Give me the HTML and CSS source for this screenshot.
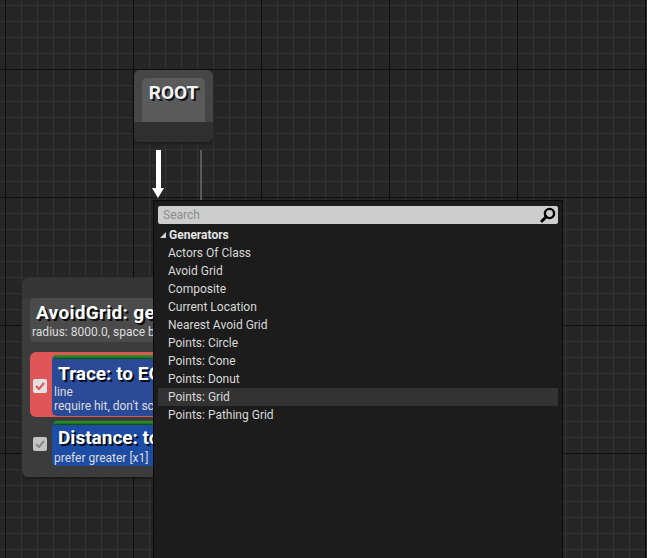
FILE: index.html
```html
<!DOCTYPE html>
<html>
<head>
<meta charset="utf-8">
<link rel="stylesheet" href="styles.css">
</head>
<body>
<div class="canvas">
  <div class="root-node">
    <div class="root-btn"><span class="root-label">ROOT</span></div>
    <div class="root-pin"></div>
  </div>

  <div class="wire-arrow">
    <svg width="14" height="50" viewBox="0 0 14 50"><rect x="5" y="0" width="5" height="39" fill="#ffffff"/><polygon points="1,38 13,38 7,48" fill="#ffffff"/></svg>
  </div>
  <div class="wire-gray"></div>

  <div class="gen-node">
    <div class="gen-title">
      <div class="title-text">AvoidGrid: generate around Querier</div>
      <div class="sub-text">radius: 8000.0, space between: 100.0</div>
    </div>
    <div class="test-row selected">
      <div class="check-cell"><span class="check on"><svg width="10" height="8" viewBox="0 0 10 8"><polyline points="1,4 4,7 9,1" fill="none" stroke="#e05a5a" stroke-width="2.2"/></svg></span></div>
      <div class="test-block trace">
        <div class="stripe"></div>
        <div class="test-title">Trace: to EQSContext_Target</div>
        <div class="test-sub">line</div>
        <div class="test-sub">require hit, don't score</div>
      </div>
    </div>
    <div class="test-row plain">
      <div class="check-cell"><span class="check off"><svg width="10" height="8" viewBox="0 0 10 8"><polyline points="1,4 4,7 9,1" fill="none" stroke="#8a8a8a" stroke-width="2.2"/></svg></span></div>
      <div class="test-block dist">
        <div class="stripe"></div>
        <div class="test-title">Distance: to Querier</div>
        <div class="test-sub">prefer greater [x1]</div>
      </div>
    </div>
  </div>

  <div class="menu">
    <div class="search">
      <span class="placeholder">Search</span>
      <svg class="mag" width="16" height="16" viewBox="0 0 16 16"><circle cx="9.5" cy="6.5" r="4.6" fill="none" stroke="#000" stroke-width="2.4"/><line x1="6.2" y1="9.8" x2="2" y2="14" stroke="#000" stroke-width="3" stroke-linecap="round"/></svg>
    </div>
    <div class="tree">
      <div class="row cat"><svg class="tri" width="7" height="7" viewBox="0 0 7 7"><polygon points="6,0 6,6 0,6" fill="#d0d0d0"/></svg><span>Generators</span></div>
      <div class="row">Actors Of Class</div>
      <div class="row">Avoid Grid</div>
      <div class="row">Composite</div>
      <div class="row">Current Location</div>
      <div class="row">Nearest Avoid Grid</div>
      <div class="row">Points: Circle</div>
      <div class="row">Points: Cone</div>
      <div class="row">Points: Donut</div>
      <div class="row hover">Points: Grid</div>
      <div class="row">Points: Pathing Grid</div>
    </div>
  </div>
</div>
</body>
</html>
```
FILE: styles.css
```css
html, body {
  margin: 0;
  padding: 0;
  background: #262626;
}
.canvas {
  position: relative;
  width: 647px;
  height: 558px;
  overflow: hidden;
  font-family: Roboto, "Liberation Sans", sans-serif;
  background-color: #262626;
  background-image:
    linear-gradient(to right, #0f0f0f 1px, transparent 1px),
    linear-gradient(to bottom, #0f0f0f 1px, transparent 1px),
    linear-gradient(to right, #333333 1px, transparent 1px),
    linear-gradient(to bottom, #333333 1px, transparent 1px);
  background-size: 128px 128px, 128px 128px, 16px 16px, 16px 16px;
  background-position: 133px 0, 0 69px, 5px 0, 0 5px;
}

/* ROOT node */
.root-node {
  position: absolute;
  left: 134px;
  top: 70px;
  width: 79px;
  height: 72px;
  border-radius: 6px;
  background: #464646;
  display: flex;
  flex-direction: column;
  overflow: hidden;
  box-shadow: 0 1px 3px rgba(0,0,0,0.5);
}
.root-btn {
  margin: 8px 8px 0 8px;
  height: 44px;
  border-radius: 5px 5px 0 0;
  background: #5a5a5a;
  display: flex;
  justify-content: center;
}
.root-label {
  color: #f2f2f2;
  font-weight: 700;
  font-size: 19px;
  line-height: 22px;
  padding-top: 4px;
  text-shadow: 2px 2px 0 rgba(0,0,0,0.8);
}
.root-pin {
  flex: 1;
  background: #2f2f2f;
}

.wire-arrow {
  position: absolute;
  left: 151px;
  top: 150px;
  width: 14px;
  height: 50px;
}
.wire-arrow svg { display: block; }
.wire-gray {
  position: absolute;
  left: 200px;
  top: 150px;
  width: 2px;
  height: 50px;
  background: #5a5a5a;
}

/* Generator node (clipped where the menu covers it) */
.gen-node {
  position: absolute;
  left: 22px;
  top: 278px;
  width: 132px;
  height: 199px;
  border-radius: 6px 0 0 6px;
  padding: 20px 0 0 8px;
  box-sizing: border-box;
  display: flex;
  flex-direction: column;
  overflow: hidden;
  box-shadow: 0 1px 3px rgba(0,0,0,0.5);
  background: linear-gradient(to bottom, #353535 0, #353535 20px, #3c3c3c 20px);
}
.gen-title {
  height: 44px;
  box-sizing: border-box;
  padding: 4px 0 0 6px;
  border-radius: 5px 0 0 5px;
  background: #4b4b4b;
  white-space: nowrap;
  overflow: hidden;
}
.title-text {
  color: #ffffff;
  font-weight: 700;
  font-size: 19px;
  line-height: 22px;
  letter-spacing: 0.3px;
  text-shadow: 2px 2px 0 rgba(0,0,0,0.85);
}
.sub-text {
  color: #dddddd;
  font-size: 12px;
  line-height: 14px;
  margin-left: -4px;
  margin-top: 1px;
}
.test-row {
  display: flex;
  height: 65px;
  margin-top: 10px;
  border-radius: 6px 0 0 6px;
  box-sizing: border-box;
  padding: 3px 0 1px 0;
}
.test-row.plain {
  margin-top: 2px;
  height: 50px;
  padding: 2px 0 3px 0;
}
.test-row.selected {
  background: #e05656;
}
.check-cell {
  width: 22px;
  flex: none;
  display: flex;
  align-items: center;
  padding-left: 3px;
  box-sizing: border-box;
}
.check {
  width: 14px;
  height: 14px;
  border-radius: 2px;
  display: flex;
  align-items: center;
  justify-content: center;
}
.check.on { background: #e2e2e2; }
.check.off { background: #c4c4c4; }
.check svg { display: block; }
.test-block {
  flex: 1;
  border-radius: 5px 0 0 5px;
  overflow: hidden;
  white-space: nowrap;
  padding-left: 2px;
}
.test-block.trace { background: #2a4a98; }
.test-block.dist { background: #1d4ca4; }
.stripe {
  height: 4px;
  background: linear-gradient(to bottom, #2c9a2c 0, #1e7a1e 60%, #0d3d0d 100%);
}
.test-title {
  color: #ffffff;
  font-weight: 700;
  font-size: 19px;
  line-height: 22px;
  padding-left: 4px;
  margin-top: 4px;
  text-shadow: 2px 2px 0 rgba(0,0,0,0.85);
}
.dist .test-title { margin-top: 2px; }
.test-sub {
  color: #dcdcdc;
  font-size: 12px;
  line-height: 14px;
}
.dist .test-sub { margin-top: 2px; }

/* Context menu */
.menu {
  position: absolute;
  left: 153px;
  top: 200px;
  width: 410px;
  height: 370px;
  box-sizing: border-box;
  border: 1px solid #0a0a0a;
  background: #1c1c1c;
  padding: 5px 4px 0 4px;
}
.search {
  height: 18px;
  border-radius: 2px;
  background: #cdcdcd;
  display: flex;
  align-items: center;
  justify-content: space-between;
  padding: 0 2px 0 5px;
}
.placeholder {
  color: #8c8c8c;
  font-size: 12px;
  line-height: 14px;
}
.mag { display: block; }
.tree {
  margin-top: 2px;
}
.row {
  height: 18px;
  line-height: 18px;
  font-size: 12px;
  color: #d8d8d8;
  padding-left: 10px;
  white-space: nowrap;
}
.row.cat {
  padding-left: 2px;
  font-weight: 700;
  color: #e4e4e4;
  display: flex;
  align-items: center;
}
.row.cat .tri {
  display: block;
  margin-right: 2px;
  margin-top: 1px;
}
.row.hover {
  background: #333333;
}
```
